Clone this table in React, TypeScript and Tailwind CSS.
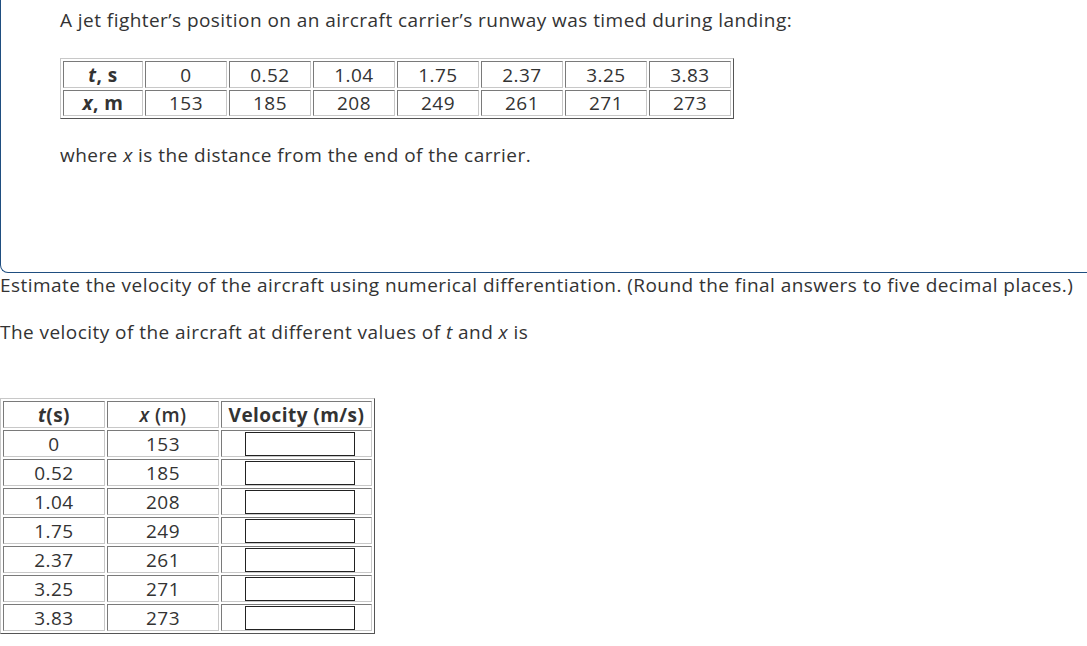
const DATA = [
  ['0', '153'],
  ['0.52', '185'],
  ['1.04', '208'],
  ['1.75', '249'],
  ['2.37', '261'],
  ['3.25', '271'],
  ['3.83', '273'],
];

// inset cell borders, like a legacy <table border="1">
const cell =
  'border border-t-[#7a7a7a] border-l-[#7a7a7a] border-b-[#c8c8c8] border-r-[#c8c8c8] text-center p-0';
const outer =
  'border-separate border-spacing-[2px] border border-t-[#c8c8c8] border-l-[#c8c8c8] border-b-[#555] border-r-[#555] leading-[20px]';

export default function App() {
  return (
    <div
      className="w-[1087px] h-[646px] overflow-hidden bg-white text-[#333] text-[19px] tracking-[0.45px]"
      style={{ fontFamily: '"Open Sans", Lato, sans-serif' }}
    >
      {/* question stem panel */}
      <div className="h-[273px] w-[1100px] border-l border-b border-[#1f4e80] rounded-bl-[8px] pl-[59px] pt-[8px]">
        <p className="leading-[24px] whitespace-nowrap">
          A jet fighter’s position on an aircraft carrier’s runway was timed during landing:
        </p>
        <table className={`mt-[26px] ${outer}`}>
          <tbody>
            <tr className="h-[27px]">
              <td className={`${cell} w-[80px] font-bold`}>
                <i>t</i>, s
              </td>
              {DATA.map(([t]) => (
                <td key={t} className={`${cell} w-[82px]`}>
                  {t}
                </td>
              ))}
            </tr>
            <tr className="h-[26px]">
              <td className={`${cell} font-bold`}>
                <i>x</i>, m
              </td>
              {DATA.map(([t, x]) => (
                <td key={t} className={cell}>
                  {x}
                </td>
              ))}
            </tr>
          </tbody>
        </table>
        <p className="mt-[24px] leading-[24px]">
          where <i>x</i> is the distance from the end of the carrier.
        </p>
      </div>

      <p className="leading-[24px] whitespace-nowrap">
        Estimate the velocity of the aircraft using numerical differentiation. (Round the final answers to five
        decimal places.)
      </p>
      <p className="mt-[23px] leading-[24px]">
        The velocity of the aircraft at different values of <i>t</i> and <i>x</i> is
      </p>

      <table className={`mt-[54px] ${outer}`}>
        <tbody>
          <tr className="h-[27px]">
            <td className={`${cell} w-[102px] font-bold`}>
              <i>t</i>(s)
            </td>
            <td className={`${cell} w-[112px] font-semibold`}>
              <i>x</i> (m)
            </td>
            <td className={`${cell} w-[151px] font-bold px-[6px]`}>Velocity (m/s)</td>
          </tr>
          {DATA.map(([t, x]) => (
            <tr key={t} className="h-[27px]">
              <td className={cell}>{t}</td>
              <td className={cell}>{x}</td>
              <td className={cell}>
                <div className="flex justify-center pl-[6px]">
                  <input
                    type="text"
                    aria-label={`Velocity at t = ${t}`}
                    className="block w-[110px] h-[24px] border border-[#222] bg-white outline-none"
                  />
                </div>
              </td>
            </tr>
          ))}
        </tbody>
      </table>
    </div>
  );
}
